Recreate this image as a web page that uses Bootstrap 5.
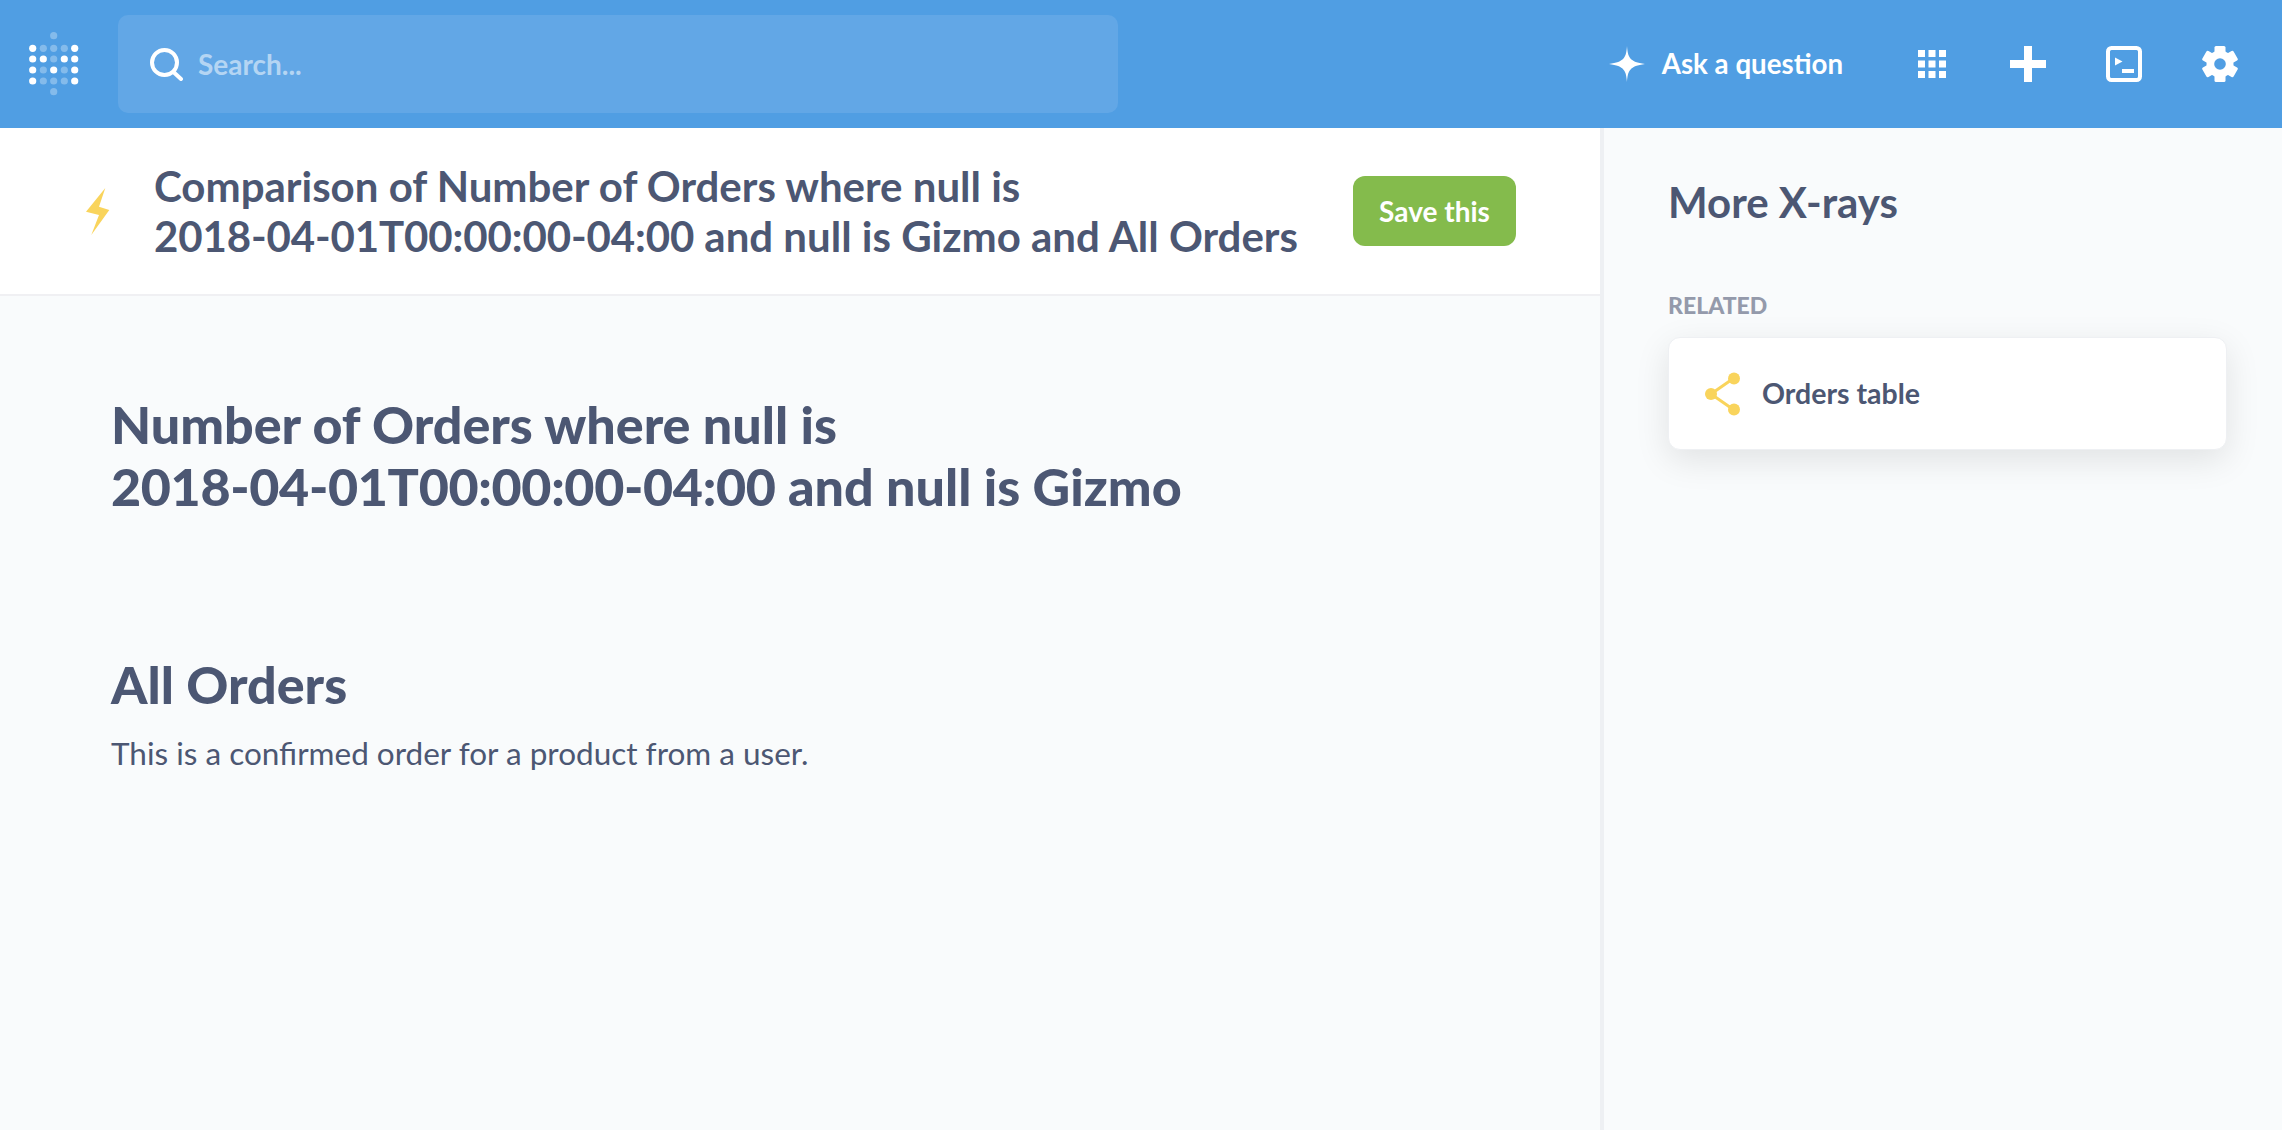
<!DOCTYPE html>
<html lang="en">
<head>
  <meta charset="UTF-8" />
  <meta name="viewport" content="width=device-width, initial-scale=1" />
  <title>X-ray</title>
  <link href="https://cdn.jsdelivr.net/npm/bootstrap@5.3.3/dist/css/bootstrap.min.css" rel="stylesheet">
  <style>
    html, body { height: 100%; }
    body { font-family: Lato, "Liberation Sans", sans-serif; color: #4c5773; background: #f9fbfc; overflow: hidden; }
    .mb-nav { height: 128px; background: #509ee3; padding: 0 44px 0 28px; flex-wrap: nowrap; }
    .mb-logo { width: 52px; height: 64px; }
    .mb-search { width: 1000px; height: 98px; margin-left: 38px; background: #62a7e6; border-radius: 10px; padding-left: 32px; }
    .mb-search span { color: #b4d5f3; font-size: 28px; font-weight: 700; margin-left: 15px; }
    .mb-ask { color: #fff; font-size: 27.700px; font-weight: 700; text-decoration: none; gap: 17px; margin-right: 75px; }
    .mb-tools { gap: 60px; }
    .mb-body { height: 1002px; }
    .mb-main { width: 1600px; }
    .mb-head { height: 168px; background: #fff; border-bottom: 2px solid #f0f0f3; padding: 0 84px 0 86px; }
    .mb-title { font-size: 42px; line-height: 50px; font-weight: 700; margin: 0 0 0 44px; flex: 1; white-space: nowrap; color: #4c5773; }
    .mb-title span { letter-spacing: -.12px; }
    .mb-save { background: #84bb4c; border: 0; color: #fff; font-size: 28px; font-weight: 700; width: 163px; height: 70px; border-radius: 12px; padding: 0; }
    .mb-content { padding: 97px 0 0 111px; }
    .mb-h { font-size: 52px; line-height: 62px; font-weight: 900; margin: 0; color: #4c5773; }
    .mb-h span { letter-spacing: -.35px; }
    .mb-gap { margin-top: 136px; }
    .mb-desc { font-size: 31.500px; line-height: 36px; margin: 20px 0 0; }
    .mb-side { width: 682px; border-left: 4px solid #eef0f3; padding: 0 55px 0 64px; }
    .mb-side-title { font-size: 42px; line-height: 50px; font-weight: 700; margin: 49px 0 0; color: #4c5773; }
    .mb-label { font-size: 23px; line-height: 28px; font-weight: 900; color: #949aab; margin-top: 64px; }
    .mb-card { height: 113px; margin-top: 18px; border: 1px solid #eef0f3; border-radius: 12px; box-shadow: 0 10px 34px rgba(0, 0, 0, .1); padding-left: 36px; }
    .mb-card span { font-size: 28.500px; font-weight: 700; color: #4c5773; margin-left: 21px; }
  </style>
</head>
<body>

  <!-- Navbar -->
  <nav class="navbar mb-nav d-flex align-items-center">
    <div class="d-flex align-items-center">
      <svg class="mb-logo" viewBox="28 31 52 64">
        <g fill="#fff">
          <circle cx="32.7" cy="47.3" r="3.6"/><circle cx="74.7" cy="47.3" r="3.6"/>
          <circle cx="32.7" cy="58" r="3.6"/><circle cx="43.3" cy="58" r="3.6"/><circle cx="64.3" cy="58" r="3.6"/><circle cx="74.7" cy="58" r="3.6"/>
          <circle cx="32.7" cy="69" r="3.6"/><circle cx="53.7" cy="69" r="3.6"/><circle cx="74.7" cy="69" r="3.6"/>
          <circle cx="32.7" cy="80" r="3.6"/><circle cx="74.7" cy="80" r="3.6"/>
        </g>
        <g fill="#fff" fill-opacity=".3">
          <circle cx="53.7" cy="34.7" r="3.6"/>
          <circle cx="43.3" cy="47.3" r="3.6"/><circle cx="53.7" cy="47.3" r="3.6"/><circle cx="64.3" cy="47.3" r="3.6"/>
          <circle cx="53.7" cy="58" r="3.6"/>
          <circle cx="43.3" cy="69" r="3.6"/><circle cx="64.3" cy="69" r="3.6"/>
          <circle cx="43.3" cy="80" r="3.6"/><circle cx="53.7" cy="80" r="3.6"/><circle cx="64.3" cy="80" r="3.6"/>
          <circle cx="53.7" cy="90.7" r="3.6"/>
        </g>
      </svg>
      <div class="mb-search d-flex align-items-center">
        <svg width="33" height="33" viewBox="0 0 33 33" fill="none" stroke="#fff" stroke-width="4" stroke-linecap="round"><circle cx="14.500" cy="14.500" r="12.500"/><path d="M24 24.500l7 6.500"/></svg>
        <span>Search...</span>
      </div>
    </div>
    <div class="d-flex align-items-center ms-auto">
      <a class="mb-ask d-flex align-items-center" href="#">
        <svg width="36" height="36" viewBox="0 0 36 36" fill="#fff"><path d="M18 0c.8 11 2.500 16 18 18-15.500 2-17.200 7-18 18-.8-11-2.500-16-18-18 15.500-2 17.200-7 18-18z"/></svg>
        Ask a question
      </a>
      <div class="mb-tools d-flex align-items-center">
        <svg class="me-1" width="28" height="28" viewBox="0 0 28 28" fill="#fff"><path d="M0 0h7v7H0zM10.500 0h7v7h-7zM21 0h7v7h-7zM0 10.500h7v7H0zM10.500 10.500h7v7h-7zM21 10.500h7v7h-7zM0 21h7v7H0zM10.500 21h7v7h-7zM21 21h7v7h-7z"/></svg>
        <svg width="36" height="36" viewBox="0 0 36 36" fill="#fff"><path d="M14 0h8v14h14v8H22v14h-8V22H0v-8h14z"/></svg>
        <svg width="36" height="36" viewBox="0 0 36 36"><rect x="2" y="2" width="32" height="32" rx="3.500" fill="none" stroke="#fff" stroke-width="4"/><path d="M9 11.500l7.500 4-7.500 4zM16 23h12v4H16z" fill="#fff"/></svg>
        <svg width="36" height="36" viewBox="0 0 36 36">
          <g fill="#fff">
            <rect x="12.500" y="0" width="11" height="36" rx="1.500"/>
            <rect x="12.500" y="0" width="11" height="36" rx="1.500" transform="rotate(60 18 18)"/>
            <rect x="12.500" y="0" width="11" height="36" rx="1.500" transform="rotate(120 18 18)"/>
            <circle cx="18" cy="18" r="13.500"/>
          </g>
          <circle cx="18" cy="18" r="5.800" fill="#509ee3"/>
        </svg>
      </div>
    </div>
  </nav>

  <div class="mb-body d-flex">
    <div class="mb-main">
      <div class="mb-head d-flex align-items-center">
        <svg width="24" height="47" viewBox="0 0 24 47" fill="#f9d45c"><path d="M19.300 0L0 23.700l13 3.300-7.700 20L23.300 22 13 18.700z"/></svg>
        <h1 class="mb-title">Comparison of Number of Orders where null is<br><span>2018-04-01T00:00:00-04:00</span> and null is Gizmo and All Orders</h1>
        <button class="btn mb-save" type="button">Save this</button>
      </div>
      <div class="mb-content">
        <h2 class="mb-h">Number of Orders where null is<br><span>2018-04-01T00:00:00-04:00</span> and null is Gizmo</h2>
        <h2 class="mb-h mb-gap">All Orders</h2>
        <p class="mb-desc">This is a confirmed order for a product from a user.</p>
      </div>
    </div>

    <div class="mb-side flex-grow-1">
      <h3 class="mb-side-title">More X-rays</h3>
      <div class="mb-label text-uppercase">Related</div>
      <div class="card mb-card flex-row align-items-center">
        <svg width="36" height="44" viewBox="0 0 36 44"><path d="M6 22L29 6M6 22l23 16" stroke="#f9d45c" stroke-width="3" fill="none"/><g fill="#f9d45c"><circle cx="6" cy="22" r="6"/><circle cx="29" cy="6.500" r="6"/><circle cx="29" cy="37.500" r="6"/></g></svg>
        <span>Orders table</span>
      </div>
    </div>
  </div>

  <script src="https://cdn.jsdelivr.net/npm/bootstrap@5.3.3/dist/js/bootstrap.bundle.min.js"></script>
</body>
</html>
